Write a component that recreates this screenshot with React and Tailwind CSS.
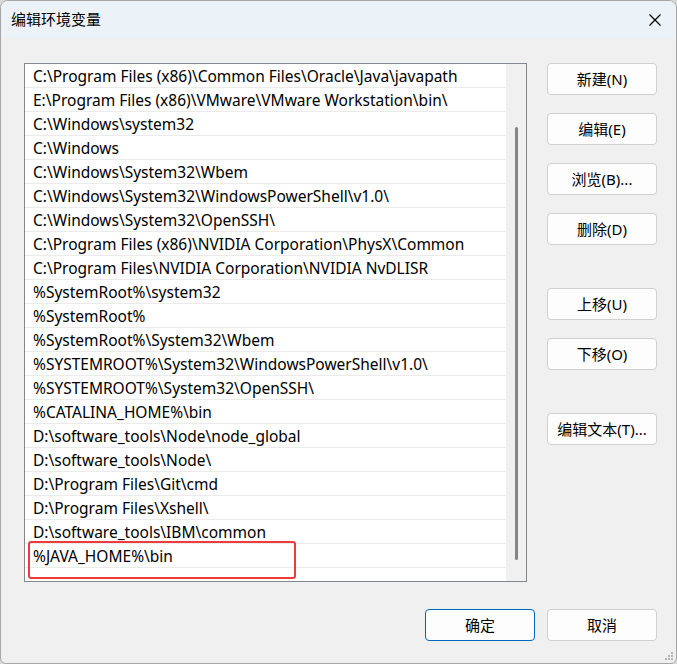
import React from 'react';

const paths = [
  'C:\\Program Files (x86)\\Common Files\\Oracle\\Java\\javapath',
  'E:\\Program Files (x86)\\VMware\\VMware Workstation\\bin\\',
  'C:\\Windows\\system32',
  'C:\\Windows',
  'C:\\Windows\\System32\\Wbem',
  'C:\\Windows\\System32\\WindowsPowerShell\\v1.0\\',
  'C:\\Windows\\System32\\OpenSSH\\',
  'C:\\Program Files (x86)\\NVIDIA Corporation\\PhysX\\Common',
  'C:\\Program Files\\NVIDIA Corporation\\NVIDIA NvDLISR',
  '%SystemRoot%\\system32',
  '%SystemRoot%',
  '%SystemRoot%\\System32\\Wbem',
  '%SYSTEMROOT%\\System32\\WindowsPowerShell\\v1.0\\',
  '%SYSTEMROOT%\\System32\\OpenSSH\\',
  '%CATALINA_HOME%\\bin',
  'D:\\software_tools\\Node\\node_global',
  'D:\\software_tools\\Node\\',
  'D:\\Program Files\\Git\\cmd',
  'D:\\Program Files\\Xshell\\',
  'D:\\software_tools\\IBM\\common',
  '%JAVA_HOME%\\bin',
  '',
];

function Btn({ children, primary, className = '' }) {
  return (
    <button
      className={
        'w-[110px] h-[32px] rounded-[4px] bg-[#fdfdfd] text-[15px] text-black flex items-center justify-center ' +
        (primary ? 'border border-[#0067c0] ' : 'border border-[#d0d0d0] ') +
        className
      }
    >
      {children}
    </button>
  );
}

export default function App() {
  return (
    <div
      className="w-[677px] h-[664px] bg-[#d8d8d8]"
      style={{ fontFamily: '"Noto Sans", "Noto Sans CJK SC", sans-serif' }}
    >
      <div className="w-full h-full flex flex-col rounded-t-[8px] rounded-b-[6px] border border-[#a6a6a6] bg-[#f0f0f0] overflow-hidden relative">
        {/* title bar */}
        <div className="h-[37px] shrink-0 bg-[#ebf3f9] flex items-center justify-between pl-[10px] pr-[14px]">
          <span className="text-[15px] text-black">编辑环境变量</span>
          <svg width="14" height="14" viewBox="0 0 14 14" className="text-black">
            <path d="M1.5 1.5 L12.5 12.5 M12.5 1.5 L1.5 12.5" stroke="currentColor" strokeWidth="1.2" fill="none" />
          </svg>
        </div>

        {/* body */}
        <div className="flex pl-[23px] pt-[25px] pr-[19px]">
          <div className="w-[503px] h-[519px] border border-[#828790] bg-white flex relative">
            <div className="flex-1 overflow-hidden">
              {paths.map((p, i) => (
                <div
                  key={i}
                  className="h-[24px] border-b border-[#ebebeb] pl-[8px] pt-[2px] flex items-center text-[15.5px] text-black whitespace-nowrap"
                >
                  {p}
                </div>
              ))}
            </div>
            <div className="w-[20px] bg-[#f0f0f0] pt-[63px] flex justify-center">
              <div className="w-[3px] h-[433px] rounded-full bg-[#858585] ml-[1px]" />
            </div>
            {/* highlight annotation */}
            <div className="absolute left-[3px] top-[477px] w-[268px] h-[38px] border-2 border-[#ee3b3b] rounded-[3px] pointer-events-none" />
          </div>

          <div className="ml-[20px] flex flex-col">
            <Btn>新建(N)</Btn>
            <Btn className="mt-[18px]">编辑(E)</Btn>
            <Btn className="mt-[18px]">浏览(B)...</Btn>
            <Btn className="mt-[18px]">删除(D)</Btn>
            <Btn className="mt-[43px]">上移(U)</Btn>
            <Btn className="mt-[18px]">下移(O)</Btn>
            <Btn className="mt-[43px]">编辑文本(T)...</Btn>
          </div>
        </div>

        {/* footer */}
        <div className="flex justify-end gap-[12px] pr-[19px] pt-[27px]">
          <Btn primary>确定</Btn>
          <Btn>取消</Btn>
        </div>

        {/* resize grip */}
        <svg width="10" height="10" viewBox="0 0 10 10" className="absolute right-[2px] bottom-[2px]">
          <g fill="#b4b4b4">
            <rect x="7" y="1" width="2" height="2" />
            <rect x="4" y="4" width="2" height="2" />
            <rect x="7" y="4" width="2" height="2" />
            <rect x="1" y="7" width="2" height="2" />
            <rect x="4" y="7" width="2" height="2" />
            <rect x="7" y="7" width="2" height="2" />
          </g>
        </svg>
      </div>
    </div>
  );
}
